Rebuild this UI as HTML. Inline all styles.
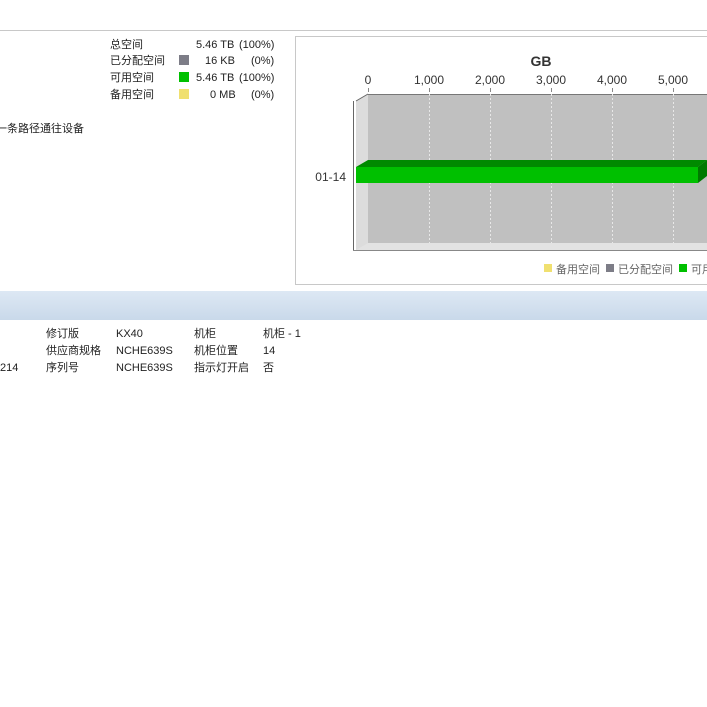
<!DOCTYPE html>
<html><head><meta charset="utf-8"><style>
body{margin:0;width:707px;height:707px;overflow:hidden;background:#fff;font-family:"Liberation Sans","Noto Sans CJK SC",sans-serif;font-size:11px;color:#222;position:relative}
.a{position:absolute;white-space:nowrap;line-height:13px}
.t{position:absolute;white-space:nowrap;line-height:13px;margin-top:2px}
.sq{position:absolute;width:10px;height:10px}
</style></head><body>
<div class="a" style="left:0;top:30px;width:707px;height:1px;background:#c8c8c8"></div>
<div class="t" style="left:110px;top:37px">总空间</div>
<div class="t" style="left:110px;top:53px">已分配空间</div>
<div class="t" style="left:110px;top:70px">可用空间</div>
<div class="t" style="left:110px;top:87px">备用空间</div>
<div class="sq" style="left:179px;top:55px;background:#7d7d87"></div>
<div class="sq" style="left:179px;top:72px;background:#00c000"></div>
<div class="sq" style="left:179px;top:89px;background:#f0e070"></div>
<div class="t" style="left:196px;top:37px">5.46 TB</div>
<div class="t" style="left:205px;top:53px">16 KB</div>
<div class="t" style="left:196px;top:70px">5.46 TB</div>
<div class="t" style="left:210px;top:87px">0 MB</div>
<div class="t" style="left:239px;top:37px">(100%)</div>
<div class="t" style="left:251px;top:53px">(0%)</div>
<div class="t" style="left:239px;top:70px">(100%)</div>
<div class="t" style="left:251px;top:87px">(0%)</div>
<div class="t" style="left:-4px;top:121px">一条路径通往设备</div>
<svg class="a" style="left:0;top:0" width="707" height="707">
<rect x="295.5" y="36.5" width="420" height="248" fill="#fff" stroke="#c8c8c8"/>
<text x="541" y="66" font-family="Liberation Sans" font-weight="bold" font-size="14" fill="#333" text-anchor="middle">GB</text>
<g font-family="Liberation Sans" font-size="12" fill="#333" text-anchor="middle">
<text x="368" y="84">0</text><text x="429" y="84">1,000</text><text x="490" y="84">2,000</text><text x="551" y="84">3,000</text><text x="612" y="84">4,000</text><text x="673" y="84">5,000</text>
</g>
<g stroke="#888"><line x1="368.5" y1="88" x2="368.5" y2="92"/><line x1="429.5" y1="88" x2="429.5" y2="92"/><line x1="490.5" y1="88" x2="490.5" y2="92"/><line x1="551.5" y1="88" x2="551.5" y2="92"/><line x1="612.5" y1="88" x2="612.5" y2="92"/><line x1="673.5" y1="88" x2="673.5" y2="92"/></g>
<polygon points="356,101 368,94 707,94 707,250 356,250" fill="#dcdcdc"/>
<rect x="368" y="94" width="339" height="149" fill="#c0c0c0"/>
<line x1="356" y1="101" x2="368" y2="94" stroke="#666"/><line x1="368" y1="94.5" x2="707" y2="94.5" stroke="#777"/>
<polygon points="356,250 368,243 707,243 707,250" fill="#e2e2e2"/>
<g stroke="#e8e8e8" stroke-dasharray="2,2"><line x1="429.5" y1="94" x2="429.5" y2="243"/><line x1="490.5" y1="94" x2="490.5" y2="243"/><line x1="551.5" y1="94" x2="551.5" y2="243"/><line x1="612.5" y1="94" x2="612.5" y2="243"/><line x1="673.5" y1="94" x2="673.5" y2="243"/></g>
<line x1="353.5" y1="101" x2="353.5" y2="250" stroke="#666"/>
<line x1="353" y1="250.5" x2="707" y2="250.5" stroke="#888"/>
<polygon points="356,167 368,160 707,160 698,167" fill="#008a00"/>
<polygon points="698,167 707,160 707,176 698,183" fill="#007a00"/>
<rect x="356" y="167" width="342" height="16" fill="#00c000"/>
<text x="346" y="181" font-family="Liberation Sans" font-size="12" fill="#333" text-anchor="end">01-14</text>
<rect x="544" y="264" width="8" height="8" fill="#f0e070"/>
<rect x="606" y="264" width="8" height="8" fill="#7d7d87"/>
<rect x="679" y="264" width="8" height="8" fill="#00c000"/>
<g font-family="Liberation Sans,Noto Sans CJK SC" font-size="11" fill="#666"><text x="556" y="273">备用空间</text><text x="618" y="273">已分配空间</text><text x="691" y="273">可用空间</text></g>
</svg>
<div class="a" style="left:0;top:291px;width:707px;height:29px;background:linear-gradient(#dde8f4,#c9d9ea)"></div>
<div class="t" style="left:46px;top:326px">修订版</div>
<div class="t" style="left:46px;top:343px">供应商规格</div>
<div class="t" style="left:46px;top:360px">序列号</div>
<div class="t" style="left:0;top:360px">214</div>
<div class="t" style="left:116px;top:326px">KX40</div>
<div class="t" style="left:116px;top:343px">NCHE639S</div>
<div class="t" style="left:116px;top:360px">NCHE639S</div>
<div class="t" style="left:194px;top:326px">机柜</div>
<div class="t" style="left:194px;top:343px">机柜位置</div>
<div class="t" style="left:194px;top:360px">指示灯开启</div>
<div class="t" style="left:263px;top:326px">机柜 - 1</div>
<div class="t" style="left:263px;top:343px">14</div>
<div class="t" style="left:263px;top:360px">否</div>
</body></html>
